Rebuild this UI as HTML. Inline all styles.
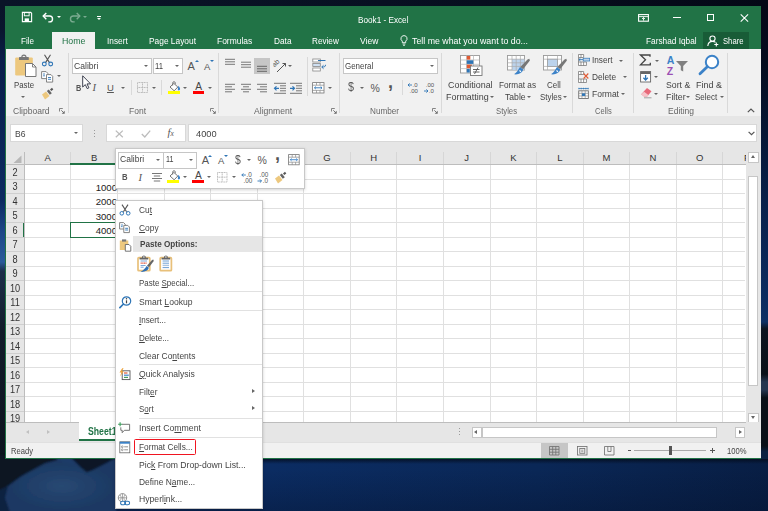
<!DOCTYPE html>
<html><head><meta charset="utf-8"><title>Book1 - Excel</title>
<style>
*{box-sizing:border-box;margin:0;padding:0}
html,body{width:768px;height:511px;overflow:hidden}
body{position:relative;background:#081226;font-family:"Liberation Sans",sans-serif;font-size:9px;color:#444}
.a{position:absolute}
.t{position:absolute;transform-origin:0 0;white-space:nowrap;line-height:12px;height:12px}
#bg{left:0;top:0;width:768px;height:511px;background:linear-gradient(180deg,#050b1b 0,#060f23 20%,#081732 45%,#091c3c 70%,#0a2146 88%,#0b264e 100%)}
#win{left:5px;top:5.6px;width:756.4px;height:453.4px;background:#217346}
#ribbon{left:6px;top:49px;width:754.9px;height:67px;background:#f1f1f1}
#fbar{left:6px;top:116px;width:754.9px;height:34px;background:#e6e6e6}
#sheet{left:6px;top:150px;width:739.5px;height:272px;background:#fff}
#vscroll{left:745.5px;top:150px;width:15px;height:272px;background:#e6e6e6}
#sbar{left:6px;top:422px;width:754.9px;height:20px;background:#e6e6e6}
#status{left:6px;top:442px;width:754.9px;height:16.2px;background:#f1f1f1}
.wt{color:#fff}
.dd{position:absolute;width:0;height:0;border-left:2.5px solid transparent;border-right:2.5px solid transparent;border-top:2.8px solid #666;margin-left:-.3px}
.sep{position:absolute;width:1px;background:#d9d9d9}
.lbl{position:absolute;transform-origin:0 0;white-space:nowrap;line-height:12px;height:12px;color:#666;font-size:9px;top:104.500px}
.box{position:absolute;background:#fff;border:1px solid #c6c6c6}
.ln{position:absolute;height:1px;background:#777}

</style></head><body>
<div id="bg" class="a"></div>
<svg class="a" style="left:0;top:0" width="768" height="511" viewBox="0 0 768 511"><defs><linearGradient id="lg" x1="0" y1="0" x2="0" y2="1"><stop offset="0.000" stop-color="#0a1428"/><stop offset="0.053" stop-color="#09152e"/><stop offset="0.119" stop-color="#091e4a"/><stop offset="0.427" stop-color="#0b2a60"/><stop offset="0.498" stop-color="#1d4788"/><stop offset="0.564" stop-color="#2a5a9a"/><stop offset="0.584" stop-color="#1c2e4a"/><stop offset="0.714" stop-color="#121c2a"/><stop offset="1.000" stop-color="#0c141e"/></linearGradient><linearGradient id="tg" x1="0" y1="0" x2="1" y2="0"><stop offset="0" stop-color="#0a1428"/><stop offset=".5" stop-color="#081022"/><stop offset="1" stop-color="#040816"/></linearGradient><linearGradient id="rgt" x1="0" y1="0" x2="0" y2="1"><stop offset="0.000" stop-color="#040816"/><stop offset="0.119" stop-color="#040c1e"/><stop offset="0.273" stop-color="#061634"/><stop offset="0.427" stop-color="#08204a"/><stop offset="0.648" stop-color="#0c2c60"/><stop offset="0.696" stop-color="#0e3064"/><stop offset="0.711" stop-color="#0c1420"/><stop offset="0.811" stop-color="#0a1018"/><stop offset="0.828" stop-color="#263650"/><stop offset="0.846" stop-color="#263650"/><stop offset="0.863" stop-color="#0a1018"/><stop offset="0.969" stop-color="#0a1018"/><stop offset="0.982" stop-color="#0a2040"/><stop offset="1.000" stop-color="#0a2040"/></linearGradient><linearGradient id="bg2" x1="0" y1="0" x2="1" y2="0"><stop offset="0" stop-color="#0a275c"/><stop offset=".35" stop-color="#0b2c62"/><stop offset=".7" stop-color="#0a2756"/><stop offset="1" stop-color="#081e44"/></linearGradient><linearGradient id="dk" x1="0" y1="0" x2="0" y2="1"><stop offset="0" stop-color="#04102a" stop-opacity="0"/><stop offset="1" stop-color="#04102a" stop-opacity=".35"/></linearGradient><linearGradient id="sh" x1="0" y1="0" x2="0" y2="1"><stop offset="0" stop-color="#030a18" stop-opacity=".75"/><stop offset="1" stop-color="#030a18" stop-opacity="0"/></linearGradient><radialGradient id="rg" cx=".5" cy=".5" r=".5"><stop offset="0" stop-color="#2a4a74" stop-opacity=".9"/><stop offset="1" stop-color="#2a4a74" stop-opacity="0"/></radialGradient><filter id="bl" x="-10%" y="-20%" width="120%" height="140%"><feGaussianBlur stdDeviation="1.300"/></filter></defs>
<rect x="0" y="0" width="768" height="7" fill="url(#tg)"/><rect x="0" y="6" width="6" height="454" fill="url(#lg)"/><rect x="760" y="6" width="8" height="454" fill="url(#rgt)"/>
<rect x="0" y="459" width="768" height="52" fill="url(#bg2)"/>
<rect x="0" y="459" width="768" height="5" fill="url(#sh)"/><rect x="116" y="470" width="652" height="41" fill="url(#dk)"/>
<g filter="url(#bl)"><rect x="-4" y="455" width="120" height="60" fill="#1b3963"/>
<ellipse cx="62" cy="486" rx="52" ry="24" fill="url(#rg)"/>
<path d="M-4 455h61v5l-12 3.300l-23.300 12.700l-13.700 10l-8 4l-4 2z" fill="#0a1324"/>
<path d="M72 455v4l8 7.700l6.700 5.800l6.300-2.500l13.700-7l9.300-5v-3z" fill="#0b1528"/>
<path d="M-4 492l4-2l8-4l-3 12l6 17h-15z" fill="#0f2240"/>
<path d="M57 459h15l6 6l-14-2z" fill="#1a3a68"/></g>
</svg>
<div id="win" class="a"></div>
<!-- title bar -->
<svg class="a" style="left:21.300px;top:11.400px" width="12" height="12" viewBox="0 0 13 13"><path d="M1.5 1.5h9l1 1v9h-10z" fill="none" stroke="#fff" stroke-width="1.2"/><rect x="3.6" y="1.8" width="5.2" height="3.4" fill="none" stroke="#fff" stroke-width="1"/><rect x="4" y="8" width="4.6" height="3.4" fill="#fff"/></svg>
<svg class="a" style="left:42.200px;top:11.700px" width="13" height="11" viewBox="0 0 14 12"><path d="M1.2 4.4h7a3.2 3.2 0 0 1 0 6.4h-1.400" fill="none" stroke="#fff" stroke-width="1.5"/><path d="M4.600 1l-3.400 3.400l3.400 3.400" fill="none" stroke="#fff" stroke-width="1.5"/></svg>
<div class="a" style="left:57.200px;top:15.900px;border:2px solid transparent;border-top:2.500px solid #fff;border-bottom:0"></div>
<svg class="a" style="left:67.500px;top:11.700px;opacity:.4" width="13" height="11" viewBox="0 0 14 12"><g transform="translate(14,0) scale(-1,1)"><path d="M1.2 4.4h7a3.2 3.2 0 0 1 0 6.4h-1.400" fill="none" stroke="#fff" stroke-width="1.5"/><path d="M4.600 1l-3.400 3.400l3.400 3.400" fill="none" stroke="#fff" stroke-width="1.5"/></g></svg>
<div class="a" style="left:83px;top:15.900px;opacity:.4;border:2px solid transparent;border-top:2.500px solid #fff;border-bottom:0"></div>
<div class="a" style="left:96.500px;top:15.500px;width:4px;height:1px;background:#fff"></div>
<div class="a" style="left:96.500px;top:18px;border:2px solid transparent;border-top:2.500px solid #fff;border-bottom:0"></div>
<div class="t wt" style="transform:scaleX(0.909);left:357.500px;top:14px;font-size:9px">Book1 - Excel</div>
<!-- window controls -->
<svg class="a" style="left:637.500px;top:13.700px" width="11" height="8" viewBox="0 0 11 8"><rect x=".6" y=".6" width="9.800" height="6.600" fill="none" stroke="#fff" stroke-width="1.100"/><path d="M.6 2.600h9.800M5.500 3.600v3M4 5l1.500-1.500l1.500 1.500" fill="none" stroke="#fff" stroke-width=".9"/></svg>
<div class="a" style="left:673.300px;top:17px;width:7.500px;height:1.100px;background:#fff"></div>
<div class="a" style="left:707px;top:14.200px;width:7.200px;height:7px;border:1.100px solid #fff"></div>
<svg class="a" style="left:739.800px;top:13.700px" width="9" height="8" viewBox="0 0 9 8"><path d="M.7 .4l7.400 7.200M8.100 .4l-7.400 7.200" stroke="#fff" stroke-width="1.100" fill="none"/></svg>
<!-- tabs -->
<div class="a" style="left:52px;top:32px;width:43px;height:17.500px;background:#f1f1f1"></div>
<div class="t wt" style="transform:scaleX(0.896);left:20.6px;top:35px">File</div>
<div class="t" style="transform:scaleX(0.979);left:61.5px;top:35px;color:#217346">Home</div>
<div class="t wt" style="transform:scaleX(0.919);left:106.5px;top:35px">Insert</div>
<div class="t wt" style="transform:scaleX(0.930);left:148.5px;top:35px">Page Layout</div>
<div class="t wt" style="transform:scaleX(0.938);left:217px;top:35px">Formulas</div>
<div class="t wt" style="transform:scaleX(0.920);left:273.5px;top:35px">Data</div>
<div class="t wt" style="transform:scaleX(0.908);left:312.2px;top:35px">Review</div>
<div class="t wt" style="transform:scaleX(0.945);left:360.2px;top:35px">View</div>
<svg class="a" style="left:400px;top:35px" width="8" height="11" viewBox="0 0 8 11"><path d="M4 .6a3 3 0 0 1 1.700 5.500v1.600h-3.400v-1.600a3 3 0 0 1 1.700-5.500z" fill="none" stroke="#fff" stroke-width=".9"/><path d="M2.600 9h2.800M3 10.300h2" stroke="#fff" stroke-width=".8"/></svg>
<div class="t wt" style="transform:scaleX(0.978);left:412px;top:35px">Tell me what you want to do...</div>
<div class="t wt" style="transform:scaleX(0.919);left:645.6px;top:35px">Farshad Iqbal</div>
<div class="a" style="left:703.400px;top:32px;width:45.600px;height:16.600px;background:#185c37"></div>
<svg class="a" style="left:707px;top:34.500px" width="12" height="12" viewBox="0 0 12 12"><circle cx="5.500" cy="3.600" r="2.600" fill="none" stroke="#fff" stroke-width="1.100"/><path d="M.8 11c.3-3 2-4.600 4.700-4.600 1.300 0 2.300.4 3 1" fill="none" stroke="#fff" stroke-width="1.100"/><path d="M9.300 7.500v4M7.300 9.500h4" stroke="#fff" stroke-width="1.100"/></svg>
<div class="t wt" style="transform:scaleX(0.853);left:722.5px;top:35px">Share</div>

<div id="ribbon" class="a"></div>
<!-- clipboard group -->
<svg class="a" style="left:14px;top:54px" width="24" height="24" viewBox="0 0 24 24"><rect x="1.200" y="3.400" width="17.600" height="18" rx="1.200" fill="#edc87e"/><rect x="5" y="3" width="9.800" height="3" rx=".6" fill="#777"/><path d="M7.800 3.200a2.100 2.100 0 0 1 4.200 0" fill="none" stroke="#777" stroke-width="1.100"/><path d="M11.500 9.500h7l3.500 3.500v9.500h-10.500z" fill="#fff" stroke="#777" stroke-width="1"/><path d="M18.500 9.500v3.500h3.500" fill="none" stroke="#777" stroke-width=".9"/></svg>
<div class="t" style="transform:scaleX(0.869);left:14.2px;top:79px">Paste</div>
<div class="dd" style="left:21.500px;top:95.500px"></div>
<svg class="a" style="left:41px;top:53.500px" width="13" height="13" viewBox="0 0 13 13"><path d="M3.500 .8l4.800 7.600M9.500 .8l-4.800 7.600" stroke="#555" stroke-width="1.100" fill="none"/><circle cx="3.300" cy="10" r="1.900" fill="none" stroke="#2e75b6" stroke-width="1.100"/><circle cx="9.700" cy="10" r="1.900" fill="none" stroke="#2e75b6" stroke-width="1.100"/></svg>
<svg class="a" style="left:41px;top:70.500px" width="13" height="12" viewBox="0 0 13 12"><path d="M.6 .6h4.500l1.700 1.700v5.300h-6.200z" fill="#fff" stroke="#777" stroke-width=".9"/><path d="M5.500 3.600h4.500l1.700 1.700v5.800h-6.200z" fill="#fff" stroke="#777" stroke-width=".9"/><path d="M2 3h2M2 4.800h2" stroke="#2e75b6" stroke-width=".8"/><path d="M7 6.500h3M7 8.300h3" stroke="#2e75b6" stroke-width=".9"/></svg>
<div class="dd" style="left:57px;top:75px"></div>
<svg class="a" style="left:41px;top:87px" width="13" height="13" viewBox="0 0 13 13"><path d="M1 7.500l4-3l3.500 4.500l-4.500 3.500z" fill="#edc87e"/><path d="M5.800 4l2-1.600l3 3.800l-2 1.600z" fill="#666"/><path d="M9 2.500l2-1.700l1.300 1.600l-2 1.700z" fill="#555"/></svg>
<div class="lbl" style="transform:scaleX(0.947);left:13px">Clipboard</div>
<svg class="a" style="left:58.500px;top:107.500px" width="6" height="6" viewBox="0 0 6 6"><path d="M.5 3.500V.5H3.800" fill="none" stroke="#777" stroke-width=".9"/><path d="M2.300 2.300l2.200 2.200" fill="none" stroke="#666" stroke-width=".9"/><path d="M5.700 2.700v3h-3z" fill="#666"/></svg>
<div class="sep" style="left:67.5px;top:53px;height:60px"></div>
<!-- font group -->
<div class="box" style="left:71.500px;top:57.500px;width:80px;height:16px"></div>
<div class="t" style="transform:scaleX(0.956);left:74px;top:60px">Calibri</div>
<div class="dd" style="left:144.500px;top:65px"></div>
<div class="box" style="left:152.500px;top:57.500px;width:30.500px;height:16px"></div>
<div class="t" style="transform:scaleX(0.856);left:154.7px;top:60px">11</div>
<div class="dd" style="left:175.500px;top:65px"></div>
<div class="t" style="left:187.500px;top:59.500px;font-size:11px;color:#555">A</div>
<div class="a" style="left:194.500px;top:60px;border:2.200px solid transparent;border-bottom:2.600px solid #2e75b6;border-top:0"></div>
<div class="t" style="left:204px;top:60.500px;font-size:9.500px;color:#555">A</div>
<div class="a" style="left:210px;top:60px;border:2.200px solid transparent;border-top:2.600px solid #2e75b6;border-bottom:0"></div>
<div class="t" style="transform:scaleX(0.798);left:76.100px;top:81.700px;font-weight:bold;font-size:9.200px;color:#555">B</div>
<div class="t" style="left:92.500px;top:82px;font-style:italic;font-family:'Liberation Serif',serif;font-size:10.500px;color:#555">I</div>
<div class="t" style="left:107px;top:82px;font-size:9.500px;color:#555;text-decoration:underline">U</div>
<div class="dd" style="left:121px;top:87px"></div>
<div class="sep" style="left:131.0px;top:80px;height:15px"></div>
<svg class="a" style="left:137px;top:82px" width="11" height="11" viewBox="0 0 11 11"><path d="M.5 .5h10v10h-10zM5.500 .5v10M.5 5.500h10" fill="none" stroke="#b0b0b0" stroke-width=".9" stroke-dasharray="1 .6"/></svg>
<div class="dd" style="left:152.500px;top:87px"></div>
<div class="sep" style="left:161.3px;top:80px;height:15px"></div>
<svg class="a" style="left:168px;top:81px" width="13" height="10" viewBox="0 0 13 10"><path d="M5.800 2.400l4 3.600l-3.600 3.800l-4.200-3.800z" fill="#fff" stroke="#666" stroke-width=".9" stroke-linejoin="round"/><path d="M4.700 4.600v-2.600a1.300 1.300 0 0 1 2.600 0v1.200" fill="none" stroke="#666" stroke-width=".8"/><path d="M10.300 4.800c1.800 1.600 2.300 3.300 1.400 4.300c-1 .8-2.200.2-1.800-1.300z" fill="#3b82c8"/></svg>
<div class="a" style="left:168px;top:91px;width:11.500px;height:2.600px;background:#ffff00"></div>
<div class="dd" style="left:183.500px;top:87px"></div>
<div class="t" style="left:195.300px;top:80.800px;font-size:10.200px;color:#444">A</div>
<div class="a" style="left:192.800px;top:91px;width:11.500px;height:2.600px;background:#ff0000"></div>
<div class="dd" style="left:208px;top:87px"></div>
<div class="lbl" style="transform:scaleX(0.944);left:129.2px">Font</div>
<svg class="a" style="left:209.500px;top:107.500px" width="6" height="6" viewBox="0 0 6 6"><path d="M.5 3.500V.5H3.800" fill="none" stroke="#777" stroke-width=".9"/><path d="M2.300 2.300l2.200 2.200" fill="none" stroke="#666" stroke-width=".9"/><path d="M5.700 2.700v3h-3z" fill="#666"/></svg>
<div class="sep" style="left:218.0px;top:53px;height:60px"></div>
<!-- alignment group -->
<div class="a" style="left:254px;top:57.500px;width:16px;height:16.500px;background:#c6c6c6"></div>
<svg class="a" style="left:224px;top:56px" width="50" height="18" viewBox="0 0 50 18"><path d="M1 3.300h10M1 5.800h10M1 8.300h10" stroke="#777" stroke-width="1"/><path d="M17 6.200h10M17 8.700h10M17 11.200h10" stroke="#777" stroke-width="1"/><path d="M33 10.300h10M33 12.800h10M33 15.300h10" stroke="#666" stroke-width="1"/></svg>
<svg class="a" style="left:273px;top:58.500px" width="14" height="14" viewBox="0 0 14 14"><path d="M4 13l8.500-8.500M12.500 4.500h-3M12.500 4.500v3" stroke="#555" stroke-width="1" fill="none"/><text x="0" y="0" font-size="7" fill="#555" font-family="Liberation Sans" transform="translate(1.500,8.500) rotate(-45)">ab</text></svg>
<div class="dd" style="left:288.500px;top:65px"></div>
<div class="sep" style="left:306.5px;top:57px;height:39px"></div>
<svg class="a" style="left:311.500px;top:58px" width="15" height="15" viewBox="0 0 15 15"><rect x=".8" y="1" width="7.500" height="3" fill="#fff" stroke="#888" stroke-width=".8"/><rect x=".8" y="5.500" width="7.500" height="3" fill="#cfe0f2" stroke="#888" stroke-width=".8"/><rect x=".8" y="10" width="7.500" height="3" fill="#fff" stroke="#888" stroke-width=".8"/><path d="M6 2.500h7.500M13.500 6.800c0 2-1 2.200-3.500 2.200M11.500 7.300l-1.800 1.700l1.800 1.700" fill="none" stroke="#2e75b6" stroke-width="1"/></svg>
<svg class="a" style="left:224px;top:81px" width="80" height="14" viewBox="0 0 80 14"><g stroke="#777" stroke-width="1"><path d="M1 3.300h10M1 5.800h7M1 8.300h10M1 10.800h7"/><path d="M17 3.300h10M19 5.800h6M17 8.300h10M19 10.800h6"/><path d="M33 3.300h10M36 5.800h7M33 8.300h10M36 10.800h7"/><path d="M50 2.300h12M56 4.800h6M56 7.300h6M56 9.800h6M50 12.300h12"/><path d="M66 2.300h12M72 4.800h6M72 7.300h6M72 9.800h6M66 12.300h12"/></g><path d="M50.500 7.300h4.500M52.500 5.300l-2 2l2 2" fill="none" stroke="#2e75b6" stroke-width="1.200"/><path d="M66 7.300h4.500M68.500 5.300l2 2l-2 2" fill="none" stroke="#2e75b6" stroke-width="1.200"/></svg>
<svg class="a" style="left:312px;top:82px" width="13" height="12" viewBox="0 0 13 12"><rect x=".6" y=".6" width="11.400" height="10.400" fill="#fff" stroke="#777" stroke-width=".8"/><path d="M.6 3.200h11.400M.6 8.400h11.400M4.500 .6v2.600M8 .6v2.600M4.500 8.400v2.600M8 8.400v2.600" stroke="#888" stroke-width=".7"/><path d="M2.500 5.800h7.500M3.800 4.600l-1.300 1.200l1.300 1.200M8.700 4.600l1.300 1.200l-1.300 1.200" fill="none" stroke="#2e75b6" stroke-width=".9"/></svg>
<div class="dd" style="left:328.500px;top:87px"></div>
<div class="lbl" style="transform:scaleX(0.954);left:254px">Alignment</div>
<svg class="a" style="left:330.500px;top:107.500px" width="6" height="6" viewBox="0 0 6 6"><path d="M.5 3.500V.5H3.800" fill="none" stroke="#777" stroke-width=".9"/><path d="M2.300 2.300l2.200 2.200" fill="none" stroke="#666" stroke-width=".9"/><path d="M5.700 2.700v3h-3z" fill="#666"/></svg>
<div class="sep" style="left:338.5px;top:53px;height:60px"></div>
<!-- number group -->
<div class="box" style="left:342.500px;top:57.500px;width:95px;height:16px"></div>
<div class="t" style="transform:scaleX(0.884);left:345.2px;top:60px">General</div>
<div class="dd" style="left:430px;top:65px"></div>
<div class="t" style="transform:scaleX(0.863);left:348px;top:81.300px;font-size:12.500px;color:#555">$</div>
<div class="dd" style="left:360.500px;top:87px"></div>
<div class="t" style="left:370.500px;top:81.500px;font-size:10.500px;color:#555">%</div>
<div class="t" style="left:388px;top:75.800px;font-size:18px;font-weight:bold;color:#555">,</div>
<div class="sep" style="left:402.0px;top:80px;height:15px"></div>
<svg class="a" style="left:407px;top:82px" width="28" height="12" viewBox="0 0 28 12"><g font-family="Liberation Sans" font-size="6" fill="#555"><text x="5.500" y="4.800">.0</text><text x="2.500" y="10.800">.00</text><text x="18.800" y="4.800">.00</text><text x="21.800" y="10.800">.0</text></g><path d="M1 3h4M2.600 1.400l-1.600 1.600l1.600 1.600" fill="none" stroke="#2e75b6" stroke-width=".9"/><path d="M17 9h4M19.400 7.400l1.600 1.600l-1.600 1.600" fill="none" stroke="#2e75b6" stroke-width=".9"/></svg>
<div class="lbl" style="transform:scaleX(0.906);left:370.2px">Number</div>
<svg class="a" style="left:431.500px;top:107.500px" width="6" height="6" viewBox="0 0 6 6"><path d="M.5 3.500V.5H3.800" fill="none" stroke="#777" stroke-width=".9"/><path d="M2.300 2.300l2.200 2.200" fill="none" stroke="#666" stroke-width=".9"/><path d="M5.700 2.700v3h-3z" fill="#666"/></svg>
<div class="sep" style="left:440.5px;top:53px;height:60px"></div>
<!-- styles group -->
<svg class="a" style="left:460px;top:55px" width="23" height="22" viewBox="0 0 23 22"><rect x=".5" y=".5" width="19" height="17.500" fill="#fff" stroke="#999" stroke-width=".9"/><path d="M.5 5h19M.5 9.300h19M.5 13.600h19M6.500 .5v17.500M13.500 .5v17.500" stroke="#bbb" stroke-width=".8"/><rect x="6.800" y="1" width="3.500" height="3.600" fill="#e05a33"/><rect x="6.800" y="5.300" width="6.500" height="3.600" fill="#2e75b6"/><rect x="6.800" y="9.600" width="5" height="3.600" fill="#e05a33"/><rect x="6.800" y="13.900" width="3" height="3.600" fill="#2e75b6"/><rect x="10.500" y="11" width="11.500" height="9.500" fill="#fff" stroke="#777" stroke-width=".9"/><path d="M13 14.500h6.500M13 17h6.500M18 12.500l-3.500 6.500" stroke="#555" stroke-width=".9"/></svg>
<div class="t" style="transform:scaleX(0.990);left:448.2px;top:79px">Conditional</div>
<div class="t" style="transform:scaleX(0.993);left:445.8px;top:90.500px">Formatting</div>
<div class="dd" style="left:490px;top:96px"></div>
<svg class="a" style="left:507px;top:55px" width="23" height="22" viewBox="0 0 23 22"><rect x=".5" y=".5" width="17" height="14.500" fill="#fff" stroke="#999" stroke-width=".9"/><rect x="5" y="4.200" width="12.500" height="10.800" fill="#bcd3ec"/><path d="M.5 4.200h17M.5 7.800h17M.5 11.400h17M5 .5v14.500M9.200 .5v14.500M13.400 .5v14.500" stroke="#aaa" stroke-width=".7"/><path d="M22.300 3.800l.6 1.800l-6.800 8.700l-2.800-2.200l7.200-7.600z" fill="#777"/><path d="M13 12l3.200 2.500c-.8 3.200-4.500 5.500-9.200 4.800c3-1.600 4.200-4.800 6-7.300z" fill="#3b82c8"/><path d="M12.500 15.500l1.500 1.200" stroke="#fff" stroke-width="1.100"/></svg>
<div class="t" style="transform:scaleX(0.913);left:498.8px;top:79px">Format as</div>
<div class="t" style="transform:scaleX(0.957);left:504.5px;top:90.500px">Table</div>
<div class="dd" style="left:527.500px;top:96px"></div>
<svg class="a" style="left:543px;top:55px" width="24" height="22" viewBox="0 0 24 22"><rect x=".5" y=".5" width="18" height="14.500" fill="#fff" stroke="#999" stroke-width=".9"/><path d="M.5 4.200h18M.5 11.400h18M4.500 .5v14.500M14.500 .5v14.500" stroke="#aaa" stroke-width=".7"/><rect x="4.500" y="4.200" width="10" height="7.200" fill="#bcd3ec" stroke="#999" stroke-width=".7"/><path d="M23.300 3.800l.6 1.800l-6.800 8.700l-2.800-2.200l7.200-7.600z" fill="#777"/><path d="M14 12l3.200 2.500c-.8 3.200-4.500 5.500-9.200 4.800c3-1.600 4.200-4.800 6-7.300z" fill="#3b82c8"/><path d="M13.500 15.500l1.500 1.200" stroke="#fff" stroke-width="1.100"/></svg>
<div class="t" style="transform:scaleX(0.883);left:546.7px;top:79px">Cell</div>
<div class="t" style="transform:scaleX(0.881);left:539.7px;top:90.500px">Styles</div>
<div class="dd" style="left:563.500px;top:96px"></div>
<div class="lbl" style="transform:scaleX(0.857);left:496px">Styles</div>
<div class="sep" style="left:572.0px;top:53px;height:60px"></div>
<!-- cells group -->
<svg class="a" style="left:577.700px;top:54px" width="12.200" height="12" viewBox="0 0 13 12" preserveAspectRatio="none"><path d="M.5 .5h5.500v3h-5.500zM.5 8h8.500v3.500h-8.500zM.5 3.500v4.500M3.200 .5v3M3.200 8v3.500M6 8v3.500" fill="#fff" stroke="#777" stroke-width=".8"/><rect x="5.500" y="4.200" width="7" height="2.800" fill="#bcd3ec" stroke="#2e75b6" stroke-width=".7"/><path d="M5.500 5.600h-4.500M2.600 4.200l-1.600 1.400l1.600 1.400" fill="none" stroke="#2e75b6" stroke-width=".9"/></svg>
<div class="t" style="transform:scaleX(0.915);left:592.2px;top:54px">Insert</div>
<div class="dd" style="left:619.500px;top:59.500px"></div>
<svg class="a" style="left:577.700px;top:70.500px" width="12.200" height="12" viewBox="0 0 13 12" preserveAspectRatio="none"><path d="M.5 .5h5.500v3h-5.500zM.5 8h8.500v3.500h-8.500zM.5 3.500v4.500M3.200 .5v3M3.200 8v3.500M6 8v3.500" fill="#fff" stroke="#777" stroke-width=".8"/><path d="M6 2.500l5 5M11 2.500l-5 5" stroke="#e05a33" stroke-width="1.200"/></svg>
<div class="t" style="transform:scaleX(0.923);left:592.2px;top:70.500px">Delete</div>
<div class="dd" style="left:622.800px;top:76px"></div>
<svg class="a" style="left:577.700px;top:86.500px" width="12" height="12.500" viewBox="0 0 13 13" preserveAspectRatio="none"><path d="M1 .8v1.700M3.500 .8v1.700M6 .8v1.700M8.500 .8v1.700M11 .8v1.700M.6 1.600h10.800" stroke="#2e75b6" stroke-width=".8"/><rect x=".8" y="4" width="10.400" height="8" fill="#fff" stroke="#666" stroke-width=".9"/><path d="M.8 6.600h10.400M.8 9.300h10.400M4.300 4v8M7.800 4v8" stroke="#888" stroke-width=".7"/><rect x="4.300" y="6.600" width="3.500" height="2.700" fill="#2e75b6"/></svg>
<div class="t" style="transform:scaleX(0.947);left:592.2px;top:87.500px">Format</div>
<div class="dd" style="left:621.500px;top:93px"></div>
<div class="lbl" style="transform:scaleX(0.834);left:594.8px">Cells</div>
<div class="sep" style="left:632.5px;top:53px;height:60px"></div>
<!-- editing group -->
<svg class="a" style="left:639px;top:54px" width="13" height="12" viewBox="0 0 13 12"><path d="M11 2.800V1H1.500l5 4.800l-5 5H11.300V8.800" fill="none" stroke="#444" stroke-width="1.300"/></svg>
<div class="dd" style="left:655px;top:59.500px"></div>
<svg class="a" style="left:639.500px;top:70.500px" width="12" height="12" viewBox="0 0 12 12"><rect x=".6" y=".6" width="10" height="10.400" fill="#fff" stroke="#666" stroke-width=".9"/><rect x=".6" y=".6" width="10" height="2.400" fill="#666"/><path d="M5.600 4v5M3.400 6.800l2.200 2.200l2.200-2.200" fill="none" stroke="#2e75b6" stroke-width="1.300"/></svg>
<div class="dd" style="left:654px;top:76px"></div>
<svg class="a" style="left:639.500px;top:87px" width="13" height="12" viewBox="0 0 13 12"><path d="M7 1l4.500 3.200l-4.300 5.300h-3.200l-2.800-2.200z" fill="#e8697a"/><path d="M1.200 7.300l2.800 2.200h3.200l1.200-1.500l-4.300-3.300z" fill="#f6c4ca"/><path d="M4 10.800h7.500" stroke="#999" stroke-width=".9"/></svg>
<div class="dd" style="left:654px;top:93px"></div>
<svg class="a" style="left:665px;top:55px" width="25" height="22" viewBox="0 0 25 22"><text x="1.800" y="9" font-family="Liberation Sans" font-weight="bold" font-size="10.500" fill="#3b82c8">A</text><text x="1.800" y="20" font-family="Liberation Sans" font-weight="bold" font-size="10.500" fill="#9b4fb3">Z</text><path d="M11 6h12l-4.800 5v5.500l-2.400-1.300v-4.200z" fill="#808080"/></svg>
<div class="t" style="transform:scaleX(0.967);left:665.6px;top:78.500px">Sort &amp;</div>
<div class="t" style="transform:scaleX(0.980);left:665.6px;top:90.500px">Filter</div>
<div class="dd" style="left:686px;top:96px"></div>
<svg class="a" style="left:697px;top:54px" width="24" height="22" viewBox="0 0 24 22"><circle cx="15" cy="8" r="6.200" fill="#fff" stroke="#3b82c8" stroke-width="2"/><path d="M10.300 12.700l-7.300 7" stroke="#3b82c8" stroke-width="2.800" stroke-linecap="round"/></svg>
<div class="t" style="transform:scaleX(0.999);left:696.1px;top:78.500px">Find &amp;</div>
<div class="t" style="transform:scaleX(0.887);left:694.8px;top:90.500px">Select</div>
<div class="dd" style="left:720px;top:96px"></div>
<div class="lbl" style="transform:scaleX(0.944);left:668.3px">Editing</div>
<div class="sep" style="left:727.3px;top:53px;height:60px"></div>
<svg class="a" style="left:746.500px;top:107.500px" width="8" height="5" viewBox="0 0 8 5"><path d="M.8 4.200l3.200-3.200l3.200 3.200" fill="none" stroke="#555" stroke-width="1.200"/></svg>
<svg class="a" style="left:81.500px;top:74.500px" width="11" height="15" viewBox="0 0 11 15"><path d="M.7 .8v11.200l2.600-2.400l1.900 4l1.700-.8l-1.900-3.900h3.600z" fill="#fff" stroke="#2b3040" stroke-width=".9" stroke-linejoin="round"/></svg>

<div id="fbar" class="a"></div>
<div class="box" style="left:9.500px;top:124px;width:73.500px;height:18.300px;border-color:#d8d8d8"></div>
<div class="t" style="transform:scaleX(0.903);left:14.500px;top:127.500px;font-size:9.500px">B6</div>
<div class="dd" style="left:73.800px;top:132px"></div>
<div class="a" style="left:93.800px;top:130px;width:1px;height:1px;background:#999;box-shadow:0 3px 0 #999,0 6px 0 #999"></div>
<div class="box" style="left:105.500px;top:124px;width:80px;height:18.300px;border-color:#d8d8d8"></div>
<svg class="a" style="left:115px;top:130px" width="9" height="8" viewBox="0 0 9 8"><path d="M.8 .6l7 6.600M7.800 .6l-7 6.600" stroke="#bcbcbc" stroke-width="1.300" fill="none"/></svg>
<svg class="a" style="left:140.500px;top:130px" width="10" height="8" viewBox="0 0 10 8"><path d="M.8 4l3 3l5.400-6.400" stroke="#bcbcbc" stroke-width="1.300" fill="none"/></svg>
<div class="t" style="left:167.500px;top:127px;font-family:'Liberation Serif',serif;font-style:italic;font-size:10.500px;color:#555">f<span style="font-size:7.500px">x</span></div>
<div class="box" style="left:187.500px;top:124px;width:569.500px;height:18.300px;border-color:#d8d8d8"></div>
<div class="t" style="transform:scaleX(0.974);left:196.300px;top:127.500px;font-size:9.500px">4000</div>
<svg class="a" style="left:747.500px;top:131px" width="7" height="5" viewBox="0 0 7 5"><path d="M.6 .8l2.900 2.900l2.900-2.900" fill="none" stroke="#555" stroke-width="1.200"/></svg>

<div id="sheet" class="a"></div>
<div class="a" style="left:6px;top:150px;width:739.500px;height:14.600px;background:#e6e6e6"></div>
<div class="a" style="left:6px;top:164.600px;width:18.300px;height:257.400px;background:#e6e6e6"></div>
<svg class="a" style="left:12.500px;top:154.500px" width="10" height="9" viewBox="0 0 10 9"><path d="M8.500 .5v7.500h-8z" fill="#b7b7b7"/></svg>
<div class="a" style="left:23.8px;top:164.600px;width:1px;height:257.400px;background:#e0e0e0"></div>
<div class="a" style="left:23.8px;top:152px;width:1px;height:12.600px;background:#d6d6d6"></div>
<div class="a" style="left:70.4px;top:164.600px;width:1px;height:257.400px;background:#e0e0e0"></div>
<div class="a" style="left:70.4px;top:152px;width:1px;height:12.600px;background:#d6d6d6"></div>
<div class="a" style="left:116.9px;top:164.600px;width:1px;height:257.400px;background:#e0e0e0"></div>
<div class="a" style="left:116.9px;top:152px;width:1px;height:12.600px;background:#d6d6d6"></div>
<div class="a" style="left:163.5px;top:164.600px;width:1px;height:257.400px;background:#e0e0e0"></div>
<div class="a" style="left:163.5px;top:152px;width:1px;height:12.600px;background:#d6d6d6"></div>
<div class="a" style="left:210.1px;top:164.600px;width:1px;height:257.400px;background:#e0e0e0"></div>
<div class="a" style="left:210.1px;top:152px;width:1px;height:12.600px;background:#d6d6d6"></div>
<div class="a" style="left:256.6px;top:164.600px;width:1px;height:257.400px;background:#e0e0e0"></div>
<div class="a" style="left:256.6px;top:152px;width:1px;height:12.600px;background:#d6d6d6"></div>
<div class="a" style="left:303.2px;top:164.600px;width:1px;height:257.400px;background:#e0e0e0"></div>
<div class="a" style="left:303.2px;top:152px;width:1px;height:12.600px;background:#d6d6d6"></div>
<div class="a" style="left:349.8px;top:164.600px;width:1px;height:257.400px;background:#e0e0e0"></div>
<div class="a" style="left:349.8px;top:152px;width:1px;height:12.600px;background:#d6d6d6"></div>
<div class="a" style="left:396.4px;top:164.600px;width:1px;height:257.400px;background:#e0e0e0"></div>
<div class="a" style="left:396.4px;top:152px;width:1px;height:12.600px;background:#d6d6d6"></div>
<div class="a" style="left:442.9px;top:164.600px;width:1px;height:257.400px;background:#e0e0e0"></div>
<div class="a" style="left:442.9px;top:152px;width:1px;height:12.600px;background:#d6d6d6"></div>
<div class="a" style="left:489.5px;top:164.600px;width:1px;height:257.400px;background:#e0e0e0"></div>
<div class="a" style="left:489.5px;top:152px;width:1px;height:12.600px;background:#d6d6d6"></div>
<div class="a" style="left:536.1px;top:164.600px;width:1px;height:257.400px;background:#e0e0e0"></div>
<div class="a" style="left:536.1px;top:152px;width:1px;height:12.600px;background:#d6d6d6"></div>
<div class="a" style="left:582.6px;top:164.600px;width:1px;height:257.400px;background:#e0e0e0"></div>
<div class="a" style="left:582.6px;top:152px;width:1px;height:12.600px;background:#d6d6d6"></div>
<div class="a" style="left:629.2px;top:164.600px;width:1px;height:257.400px;background:#e0e0e0"></div>
<div class="a" style="left:629.2px;top:152px;width:1px;height:12.600px;background:#d6d6d6"></div>
<div class="a" style="left:675.8px;top:164.600px;width:1px;height:257.400px;background:#e0e0e0"></div>
<div class="a" style="left:675.8px;top:152px;width:1px;height:12.600px;background:#d6d6d6"></div>
<div class="a" style="left:722.3px;top:164.600px;width:1px;height:257.400px;background:#e0e0e0"></div>
<div class="a" style="left:722.3px;top:152px;width:1px;height:12.600px;background:#d6d6d6"></div>
<div class="a" style="left:24.300px;top:164.1px;width:721.200px;height:1px;background:#e0e0e0"></div>
<div class="a" style="left:6px;top:164.1px;width:18.300px;height:1px;background:#cfcfcf"></div>
<div class="a" style="left:24.300px;top:178.6px;width:721.200px;height:1px;background:#e0e0e0"></div>
<div class="a" style="left:6px;top:178.6px;width:18.300px;height:1px;background:#cfcfcf"></div>
<div class="a" style="left:24.300px;top:193.1px;width:721.200px;height:1px;background:#e0e0e0"></div>
<div class="a" style="left:6px;top:193.1px;width:18.300px;height:1px;background:#cfcfcf"></div>
<div class="a" style="left:24.300px;top:207.6px;width:721.200px;height:1px;background:#e0e0e0"></div>
<div class="a" style="left:6px;top:207.6px;width:18.300px;height:1px;background:#cfcfcf"></div>
<div class="a" style="left:24.300px;top:222.1px;width:721.200px;height:1px;background:#e0e0e0"></div>
<div class="a" style="left:6px;top:222.1px;width:18.300px;height:1px;background:#cfcfcf"></div>
<div class="a" style="left:24.300px;top:236.6px;width:721.200px;height:1px;background:#e0e0e0"></div>
<div class="a" style="left:6px;top:236.6px;width:18.300px;height:1px;background:#cfcfcf"></div>
<div class="a" style="left:24.300px;top:251.1px;width:721.200px;height:1px;background:#e0e0e0"></div>
<div class="a" style="left:6px;top:251.1px;width:18.300px;height:1px;background:#cfcfcf"></div>
<div class="a" style="left:24.300px;top:265.6px;width:721.200px;height:1px;background:#e0e0e0"></div>
<div class="a" style="left:6px;top:265.6px;width:18.300px;height:1px;background:#cfcfcf"></div>
<div class="a" style="left:24.300px;top:280.1px;width:721.200px;height:1px;background:#e0e0e0"></div>
<div class="a" style="left:6px;top:280.1px;width:18.300px;height:1px;background:#cfcfcf"></div>
<div class="a" style="left:24.300px;top:294.6px;width:721.200px;height:1px;background:#e0e0e0"></div>
<div class="a" style="left:6px;top:294.6px;width:18.300px;height:1px;background:#cfcfcf"></div>
<div class="a" style="left:24.300px;top:309.1px;width:721.200px;height:1px;background:#e0e0e0"></div>
<div class="a" style="left:6px;top:309.1px;width:18.300px;height:1px;background:#cfcfcf"></div>
<div class="a" style="left:24.300px;top:323.6px;width:721.200px;height:1px;background:#e0e0e0"></div>
<div class="a" style="left:6px;top:323.6px;width:18.300px;height:1px;background:#cfcfcf"></div>
<div class="a" style="left:24.300px;top:338.1px;width:721.200px;height:1px;background:#e0e0e0"></div>
<div class="a" style="left:6px;top:338.1px;width:18.300px;height:1px;background:#cfcfcf"></div>
<div class="a" style="left:24.300px;top:352.6px;width:721.200px;height:1px;background:#e0e0e0"></div>
<div class="a" style="left:6px;top:352.6px;width:18.300px;height:1px;background:#cfcfcf"></div>
<div class="a" style="left:24.300px;top:367.1px;width:721.200px;height:1px;background:#e0e0e0"></div>
<div class="a" style="left:6px;top:367.1px;width:18.300px;height:1px;background:#cfcfcf"></div>
<div class="a" style="left:24.300px;top:381.6px;width:721.200px;height:1px;background:#e0e0e0"></div>
<div class="a" style="left:6px;top:381.6px;width:18.300px;height:1px;background:#cfcfcf"></div>
<div class="a" style="left:24.300px;top:396.1px;width:721.200px;height:1px;background:#e0e0e0"></div>
<div class="a" style="left:6px;top:396.1px;width:18.300px;height:1px;background:#cfcfcf"></div>
<div class="a" style="left:24.300px;top:410.6px;width:721.200px;height:1px;background:#e0e0e0"></div>
<div class="a" style="left:6px;top:410.6px;width:18.300px;height:1px;background:#cfcfcf"></div>
<div class="a" style="left:6px;top:163.700px;width:739.500px;height:1px;background:#bdbdbd"></div>
<div class="a" style="left:23.800px;top:152px;width:1px;height:270px;background:#bdbdbd"></div>
<div class="t" style="left:37.6px;top:151.800px;width:20px;text-align:center;font-size:9.500px;color:#333">A</div>
<div class="t" style="left:84.2px;top:151.800px;width:20px;text-align:center;font-size:9.500px;color:#333">B</div>
<div class="t" style="left:130.7px;top:151.800px;width:20px;text-align:center;font-size:9.500px;color:#333">C</div>
<div class="t" style="left:177.3px;top:151.800px;width:20px;text-align:center;font-size:9.500px;color:#333">D</div>
<div class="t" style="left:223.9px;top:151.800px;width:20px;text-align:center;font-size:9.500px;color:#333">E</div>
<div class="t" style="left:270.4px;top:151.800px;width:20px;text-align:center;font-size:9.500px;color:#333">F</div>
<div class="t" style="left:317.0px;top:151.800px;width:20px;text-align:center;font-size:9.500px;color:#333">G</div>
<div class="t" style="left:363.6px;top:151.800px;width:20px;text-align:center;font-size:9.500px;color:#333">H</div>
<div class="t" style="left:410.1px;top:151.800px;width:20px;text-align:center;font-size:9.500px;color:#333">I</div>
<div class="t" style="left:456.7px;top:151.800px;width:20px;text-align:center;font-size:9.500px;color:#333">J</div>
<div class="t" style="left:503.3px;top:151.800px;width:20px;text-align:center;font-size:9.500px;color:#333">K</div>
<div class="t" style="left:549.9px;top:151.800px;width:20px;text-align:center;font-size:9.500px;color:#333">L</div>
<div class="t" style="left:596.4px;top:151.800px;width:20px;text-align:center;font-size:9.500px;color:#333">M</div>
<div class="t" style="left:643.0px;top:151.800px;width:20px;text-align:center;font-size:9.500px;color:#333">N</div>
<div class="t" style="left:689.6px;top:151.800px;width:20px;text-align:center;font-size:9.500px;color:#333">O</div>
<div class="t" style="left:737.1px;top:151.800px;width:20px;text-align:center;font-size:9.500px;color:#333">P</div>
<div class="t" style="left:6px;top:166.5px;width:18px;text-align:center;font-size:10px;color:#333;transform-origin:50% 0;transform:scaleX(.92)">2</div>
<div class="t" style="left:6px;top:181.0px;width:18px;text-align:center;font-size:10px;color:#333;transform-origin:50% 0;transform:scaleX(.92)">3</div>
<div class="t" style="left:6px;top:195.5px;width:18px;text-align:center;font-size:10px;color:#333;transform-origin:50% 0;transform:scaleX(.92)">4</div>
<div class="t" style="left:6px;top:210.0px;width:18px;text-align:center;font-size:10px;color:#333;transform-origin:50% 0;transform:scaleX(.92)">5</div>
<div class="t" style="left:6px;top:224.5px;width:18px;text-align:center;font-size:10px;color:#333;transform-origin:50% 0;transform:scaleX(.92)">6</div>
<div class="t" style="left:6px;top:239.0px;width:18px;text-align:center;font-size:10px;color:#333;transform-origin:50% 0;transform:scaleX(.92)">7</div>
<div class="t" style="left:6px;top:253.5px;width:18px;text-align:center;font-size:10px;color:#333;transform-origin:50% 0;transform:scaleX(.92)">8</div>
<div class="t" style="left:6px;top:268.0px;width:18px;text-align:center;font-size:10px;color:#333;transform-origin:50% 0;transform:scaleX(.92)">9</div>
<div class="t" style="left:6px;top:282.5px;width:18px;text-align:center;font-size:10px;color:#333;transform-origin:50% 0;transform:scaleX(.92)">10</div>
<div class="t" style="left:6px;top:297.0px;width:18px;text-align:center;font-size:10px;color:#333;transform-origin:50% 0;transform:scaleX(.92)">11</div>
<div class="t" style="left:6px;top:311.5px;width:18px;text-align:center;font-size:10px;color:#333;transform-origin:50% 0;transform:scaleX(.92)">12</div>
<div class="t" style="left:6px;top:326.0px;width:18px;text-align:center;font-size:10px;color:#333;transform-origin:50% 0;transform:scaleX(.92)">13</div>
<div class="t" style="left:6px;top:340.5px;width:18px;text-align:center;font-size:10px;color:#333;transform-origin:50% 0;transform:scaleX(.92)">14</div>
<div class="t" style="left:6px;top:355.0px;width:18px;text-align:center;font-size:10px;color:#333;transform-origin:50% 0;transform:scaleX(.92)">15</div>
<div class="t" style="left:6px;top:369.5px;width:18px;text-align:center;font-size:10px;color:#333;transform-origin:50% 0;transform:scaleX(.92)">16</div>
<div class="t" style="left:6px;top:384.0px;width:18px;text-align:center;font-size:10px;color:#333;transform-origin:50% 0;transform:scaleX(.92)">17</div>
<div class="t" style="left:6px;top:398.5px;width:18px;text-align:center;font-size:10px;color:#333;transform-origin:50% 0;transform:scaleX(.92)">18</div>
<div class="t" style="left:6px;top:413.0px;width:18px;text-align:center;font-size:10px;color:#333;transform-origin:50% 0;transform:scaleX(.92)">19</div>
<div class="a" style="left:70.400px;top:163.300px;width:47px;height:1.600px;background:#217346"></div>
<div class="a" style="left:22.800px;top:222.600px;width:1.600px;height:14.500px;background:#217346"></div>
<div class="t" style="left:80px;top:181.5px;width:37px;text-align:right;font-size:9.600px;color:#222">1000</div>
<div class="t" style="left:80px;top:196.0px;width:37px;text-align:right;font-size:9.600px;color:#222">2000</div>
<div class="t" style="left:80px;top:210.5px;width:37px;text-align:right;font-size:9.600px;color:#222">3000</div>
<div class="t" style="left:80px;top:225.0px;width:37px;text-align:right;font-size:9.600px;color:#222">4000</div>
<div class="a" style="left:69.900px;top:221.600px;width:47.800px;height:16px;border:1.600px solid #217346"></div>
<div class="a" style="left:745.500px;top:150px;width:15.400px;height:272px;background:#e6e6e6"></div>
<div class="box" style="left:748px;top:152px;width:10.500px;height:10.500px;border-color:#c6c6c6"></div>
<div class="a" style="left:750.500px;top:155.300px;border:2.800px solid transparent;border-bottom:3.200px solid #666;border-top:0"></div>
<div class="box" style="left:748.300px;top:175.500px;width:9.800px;height:210.500px;border-color:#c6c6c6"></div>
<div class="box" style="left:748px;top:412.500px;width:10.500px;height:10px;border-color:#c6c6c6"></div>
<div class="a" style="left:750.500px;top:416px;border:2.800px solid transparent;border-top:3.200px solid #666;border-bottom:0"></div>

<div id="sbar" class="a"></div>
<div id="status" class="a"></div>
<div class="a" style="left:6px;top:421.500px;width:739.500px;height:1px;background:#bdbdbd"></div>
<div class="a" style="left:25.500px;top:429.500px;border:2.400px solid transparent;border-right:3px solid #c0c0c0;border-left:0"></div>
<div class="a" style="left:46.500px;top:429.500px;border:2.400px solid transparent;border-left:3px solid #c0c0c0;border-right:0"></div>
<div class="a" style="left:78.500px;top:422px;width:40px;height:18.500px;background:#fff;border-bottom:2px solid #217346"></div>
<div class="t" style="transform:scaleX(0.844);left:87.800px;top:426.200px;font-size:10.300px;font-weight:bold;color:#217346">Sheet1</div>
<div class="a" style="left:459px;top:428px;width:1px;height:1px;background:#999;box-shadow:0 3px 0 #999,0 6px 0 #999"></div>
<div class="box" style="left:471.500px;top:427px;width:10.500px;height:11px;border-color:#c6c6c6"></div>
<div class="a" style="left:474.300px;top:429.700px;border:2.800px solid transparent;border-right:3.200px solid #666;border-left:0"></div>
<div class="box" style="left:482px;top:427px;width:235px;height:11px;border-color:#c6c6c6"></div>
<div class="box" style="left:734.500px;top:427px;width:10.500px;height:11px;border-color:#c6c6c6"></div>
<div class="a" style="left:738.600px;top:429.700px;border:2.800px solid transparent;border-left:3.200px solid #666;border-right:0"></div>
<div class="a" style="left:6px;top:441.500px;width:754.900px;height:1px;background:#e0e0e0"></div>
<div class="t" style="transform:scaleX(0.865);left:11px;top:445px;font-size:8.800px">Ready</div>
<div class="a" style="left:540.500px;top:443px;width:27px;height:15.200px;background:#c6c6c6"></div>
<svg class="a" style="left:548.500px;top:445.500px" width="11" height="10" viewBox="0 0 11 10"><path d="M.5 .5h9.500v8.500h-9.500zM.5 3.300h9.500M.5 6.200h9.500M3.700 .5v8.500M6.800 .5v8.500" fill="none" stroke="#737373" stroke-width=".85"/></svg>
<svg class="a" style="left:576.500px;top:445.500px" width="11" height="10" viewBox="0 0 11 10"><rect x=".5" y=".5" width="9.500" height="8.500" fill="none" stroke="#737373" stroke-width=".85"/><rect x="2.800" y="2.500" width="5" height="4.800" fill="none" stroke="#737373" stroke-width=".85"/><path d="M4.200 4.200h2.200M4.200 5.700h2.200" stroke="#666" stroke-width=".6"/></svg>
<svg class="a" style="left:603.500px;top:445.500px" width="11" height="10" viewBox="0 0 11 10"><path d="M.5 .5h9.500v8.500h-9.500zM3.800 .5v5h3.200v-5" fill="none" stroke="#737373" stroke-width=".85"/></svg>
<div class="a" style="left:627.500px;top:449.800px;width:3.600px;height:1.700px;background:#555"></div>
<div class="a" style="left:634px;top:450.200px;width:72px;height:1px;background:#aaa"></div>
<div class="a" style="left:668.700px;top:446.300px;width:3px;height:8.400px;background:#555"></div>
<div class="a" style="left:710px;top:450px;width:5px;height:1.300px;background:#555"></div>
<div class="a" style="left:711.900px;top:448.100px;width:1.300px;height:5px;background:#555"></div>
<div class="t" style="transform:scaleX(0.867);left:727px;top:445px;font-size:8.800px">100%</div>

<div class="a" style="left:114.500px;top:148px;width:190px;height:40.500px;background:#fff;border:1px solid #c8c8c8;box-shadow:0 1px 3px rgba(0,0,0,.18)"></div>
<div class="box" style="left:117.500px;top:151.500px;width:46px;height:17px"></div>
<div class="t" style="transform:scaleX(0.948);left:119.700px;top:153.300px">Calibri</div>
<div class="dd" style="left:155.800px;top:158.500px"></div>
<div class="box" style="left:163px;top:151.500px;width:34px;height:17px"></div>
<div class="t" style="transform:scaleX(0.792);left:166.400px;top:153.300px">11</div>
<div class="dd" style="left:189px;top:158.500px"></div>
<div class="t" style="left:201.800px;top:154px;font-size:11px;color:#555">A</div>
<div class="a" style="left:208px;top:154.500px;border:2.200px solid transparent;border-bottom:2.600px solid #2e75b6;border-top:0"></div>
<div class="t" style="left:218px;top:155px;font-size:9.500px;color:#555">A</div>
<div class="a" style="left:224px;top:154.500px;border:2.200px solid transparent;border-top:2.600px solid #2e75b6;border-bottom:0"></div>
<div class="t" style="transform:scaleX(0.834);left:234.600px;top:153.800px;font-size:12.500px;color:#555">$</div>
<div class="dd" style="left:247px;top:158.500px"></div>
<div class="t" style="left:257.500px;top:154px;font-size:10.500px;color:#555">%</div>
<div class="t" style="left:275px;top:148.100px;font-size:18px;font-weight:bold;color:#555">,</div>
<svg class="a" style="left:288px;top:154px" width="12" height="12" viewBox="0 0 12 12"><rect x=".6" y=".6" width="10.600" height="10.200" fill="#fff" stroke="#777" stroke-width=".8"/><path d="M.6 3.200h10.600M.6 8.200h10.600M4.200 .6v2.600M7.600 .6v2.600M4.200 8.200v2.600M7.600 8.200v2.600" stroke="#888" stroke-width=".7"/><path d="M2.300 5.700h7.200M3.600 4.500l-1.300 1.200l1.300 1.200M8.200 4.500l1.300 1.200l-1.300 1.200" fill="none" stroke="#3b82c8" stroke-width=".9"/></svg>
<div class="t" style="transform:scaleX(0.843);left:121.900px;top:171.300px;font-weight:bold;font-size:9.200px;color:#555">B</div>
<div class="t" style="left:138.500px;top:171.500px;font-style:italic;font-family:'Liberation Serif',serif;font-size:10.500px;color:#555">I</div>
<svg class="a" style="left:151px;top:171px" width="12" height="12" viewBox="0 0 12 12"><path d="M1 2.500h10M2.800 5h6.400M1 7.500h10M2.800 10h6.400" stroke="#777" stroke-width="1"/></svg>
<svg class="a" style="left:167.500px;top:170px" width="13" height="10" viewBox="0 0 13 10"><path d="M5.800 2.400l4 3.600l-3.600 3.800l-4.200-3.800z" fill="#fff" stroke="#666" stroke-width=".9" stroke-linejoin="round"/><path d="M4.700 4.600v-2.600a1.300 1.300 0 0 1 2.600 0v1.200" fill="none" stroke="#666" stroke-width=".8"/><path d="M10.300 4.800c1.800 1.600 2.300 3.300 1.400 4.300c-1 .8-2.200.2-1.800-1.300z" fill="#3b82c8"/></svg>
<div class="a" style="left:167.200px;top:180px;width:11.800px;height:2.800px;background:#ffff00"></div>
<div class="dd" style="left:182.800px;top:176px"></div>
<div class="t" style="left:195px;top:169.800px;font-size:10.200px;color:#444">A</div>
<div class="a" style="left:192px;top:180px;width:11.800px;height:2.800px;background:#ff0000"></div>
<div class="dd" style="left:207.600px;top:176px"></div>
<svg class="a" style="left:217px;top:172px" width="11" height="11" viewBox="0 0 11 11"><path d="M.5 .5h9.500v9.500h-9.500zM5.200 .5v9.500M.5 5.200h9.500" fill="none" stroke="#b0b0b0" stroke-width=".9" stroke-dasharray="1 .6"/></svg>
<div class="dd" style="left:232.200px;top:176px"></div>
<svg class="a" style="left:241px;top:171.500px" width="28" height="12" viewBox="0 0 28 12"><g font-family="Liberation Sans" font-size="6.400" fill="#555"><text x="5.500" y="5">.0</text><text x="2.500" y="11">.00</text><text x="18.500" y="5">.00</text><text x="21.800" y="11">.0</text></g><path d="M.8 3h4M2.400 1.400l-1.600 1.600l1.600 1.600" fill="none" stroke="#2e75b6" stroke-width=".9"/><path d="M16.500 9h4M18.900 7.400l1.600 1.600l-1.600 1.600" fill="none" stroke="#2e75b6" stroke-width=".9"/></svg>
<svg class="a" style="left:273.500px;top:171px" width="13" height="13" viewBox="0 0 13 13"><path d="M1 7.500l4-3l3.500 4.500l-4.500 3.500z" fill="#edc87e"/><path d="M5.800 4l2-1.600l3 3.800l-2 1.600z" fill="#666"/><path d="M9 2.500l2-1.700l1.300 1.600l-2 1.700z" fill="#555"/></svg>

<div class="a" style="left:114.500px;top:200px;width:148.500px;height:308.700px;background:#fff;border:1px solid #c8c8c8;box-shadow:0 1px 3px rgba(0,0,0,.18)"></div>
<svg class="a" style="left:119px;top:204px" width="12" height="12" viewBox="0 0 12 12"><path d="M3 .6l4.600 7.200M9 .6l-4.600 7.200" stroke="#555" stroke-width="1.100" fill="none"/><circle cx="2.800" cy="9.300" r="1.800" fill="none" stroke="#2e75b6" stroke-width="1"/><circle cx="9.200" cy="9.300" r="1.800" fill="none" stroke="#2e75b6" stroke-width="1"/></svg>
<div class="t" style="transform:scaleX(0.927);left:138.800px;top:204px">Cu<u>t</u></div>
<svg class="a" style="left:119px;top:221.500px" width="13" height="12" viewBox="0 0 13 12"><path d="M.6 .6h4l1.600 1.600v4.800h-5.600z" fill="#fff" stroke="#777" stroke-width=".9"/><path d="M4.800 3.400h4l1.600 1.600v5.600h-5.600z" fill="#fff" stroke="#777" stroke-width=".9"/><path d="M2 3h2M2 4.600h1.600" stroke="#2e75b6" stroke-width=".8"/><path d="M6.200 6.300h2.800M6.200 8h2.800" stroke="#2e75b6" stroke-width=".9"/></svg>
<div class="t" style="transform:scaleX(0.933);left:138.800px;top:221.700px"><u>C</u>opy</div>
<div class="a" style="left:133px;top:236.400px;width:129px;height:15.400px;background:#e6e6e6"></div>
<svg class="a" style="left:118.500px;top:238.500px" width="13" height="13" viewBox="0 0 13 13"><rect x=".8" y="1.500" width="8.500" height="9.500" fill="#edc87e"/><rect x="3" y=".4" width="4.200" height="2.200" fill="#777"/><path d="M6.300 5.500h3.700l1.800 1.800v4.900h-5.500z" fill="#fff" stroke="#666" stroke-width=".9"/></svg>
<div class="t" style="transform:scaleX(0.905);left:139.700px;top:238.300px;font-weight:bold">Paste Options:</div>
<svg class="a" style="left:137px;top:254.500px" width="17" height="18" viewBox="0 0 17 18"><rect x="1" y="2.700" width="11.800" height="13" rx=".8" fill="#fff" stroke="#e8c07a" stroke-width="1.700"/><path d="M2.600 4.600v-1.900h2.300c0-2.900 4-2.900 4 0h2.300v1.900z" fill="#666"/><circle cx="6.900" cy="2" r=".7" fill="#fff"/><path d="M3.600 6h6.400M3.600 10.500h5M3.600 12.200h3" stroke="#5b93cf" stroke-width=".8"/><path d="M3.600 8.200h6.200" stroke="#e05a44" stroke-width="1.300" stroke-dasharray="1.200 .4"/><path d="M16.300 4.600l.5 1.500l-4.800 6.200l-2-1.600l5-5.600z" fill="#666"/><path d="M9.700 11l2.200 1.800c-.8 2.600-4 4.500-8.400 4.100c2.800-1.300 4.600-3.700 6.200-5.900z" fill="#2f6fb5"/></svg>
<svg class="a" style="left:159px;top:254.500px" width="15" height="18" viewBox="0 0 15 18"><rect x="1.200" y="2.700" width="11.200" height="13" rx=".8" fill="#fff" stroke="#e8c07a" stroke-width="1.700"/><path d="M2.600 4.600v-1.900h2.300c0-2.900 4-2.900 4 0h2.300v1.900z" fill="#666"/><circle cx="6.900" cy="2" r=".7" fill="#fff"/><path d="M3.600 6h6.400M3.600 8.200h6.400M3.600 12.600h6.400" stroke="#5b93cf" stroke-width=".9"/><path d="M3.600 10.400h6.400" stroke="#a9c4e2" stroke-width="1.400"/></svg>
<div class="t" style="transform:scaleX(0.882);left:138.800px;top:276.500px">Paste <u>S</u>pecial...</div>
<div class="a" style="left:138.500px;top:291.200px;width:123.500px;height:1px;background:#e1e1e1"></div>
<svg class="a" style="left:118.500px;top:295.500px" width="13" height="13" viewBox="0 0 13 13"><circle cx="7.500" cy="5" r="4.200" fill="#fff" stroke="#2e75b6" stroke-width="1.200"/><path d="M4.500 8l-3.600 3.600" stroke="#2e75b6" stroke-width="1.700" stroke-linecap="round"/><path d="M7.500 4.300v3" stroke="#444" stroke-width="1.200"/><circle cx="7.500" cy="2.800" r=".75" fill="#444"/></svg>
<div class="t" style="transform:scaleX(0.956);left:138.800px;top:295.500px">Smart <u>L</u>ookup</div>
<div class="a" style="left:138.500px;top:310px;width:123.500px;height:1px;background:#e1e1e1"></div>
<div class="t" style="transform:scaleX(0.899);left:138.800px;top:314.300px"><u>I</u>nsert...</div>
<div class="t" style="transform:scaleX(0.895);left:138.800px;top:332px"><u>D</u>elete...</div>
<div class="t" style="transform:scaleX(0.939);left:138.800px;top:349.600px">Clear Co<u>n</u>tents</div>
<div class="a" style="left:138.500px;top:364.200px;width:123.500px;height:1px;background:#e1e1e1"></div>
<svg class="a" style="left:118.500px;top:367.500px" width="13" height="13" viewBox="0 0 13 13"><rect x="3.200" y="2.800" width="7.800" height="8.800" fill="#fff" stroke="#555" stroke-width=".9"/><path d="M5 5h3.500" stroke="#e05a33" stroke-width="1.200"/><path d="M5 7.200h4.800" stroke="#3b82c8" stroke-width="1.200"/><path d="M5 9.400h4" stroke="#4a9c5d" stroke-width="1.200"/><path d="M3.200 .3l-2.700 4.200h2l-1.600 4l4-5.200h-2.100l1.800-3z" fill="#eda23a"/></svg>
<div class="t" style="transform:scaleX(0.953);left:138.800px;top:368.100px"><u>Q</u>uick Analysis</div>
<div class="t" style="transform:scaleX(0.919);left:138.800px;top:385.800px">Filt<u>e</u>r</div>
<div class="a" style="left:252.200px;top:388.500px;border:2.900px solid transparent;border-left:3.700px solid #666;border-right:0"></div>
<div class="t" style="transform:scaleX(0.883);left:138.800px;top:403.400px">S<u>o</u>rt</div>
<div class="a" style="left:252.200px;top:406px;border:2.900px solid transparent;border-left:3.700px solid #666;border-right:0"></div>
<div class="a" style="left:138.500px;top:418px;width:123.500px;height:1px;background:#e1e1e1"></div>
<svg class="a" style="left:118px;top:421.500px" width="13" height="12" viewBox="0 0 13 12"><path d="M4 2.300h7.600v6h-5.200l-2.200 2.400v-2.400h-1.400v-3" fill="#fff" stroke="#666" stroke-width=".9"/><path d="M2.100 .3v4M.1 2.300h4" stroke="#3a9c5a" stroke-width="1.100"/></svg>
<div class="t" style="transform:scaleX(0.968);left:138.800px;top:421.500px">Insert Co<u>m</u>ment</div>
<div class="a" style="left:138.500px;top:436.800px;width:123.500px;height:1px;background:#e1e1e1"></div>
<svg class="a" style="left:118.700px;top:440.700px" width="12" height="13" viewBox="0 0 12 13"><rect x=".8" y=".8" width="10" height="11" fill="#fff" stroke="#666" stroke-width=".8"/><rect x=".8" y=".8" width="10" height="1.900" fill="#3b82c8"/><path d="M5.200 5.800h3.800M5.200 8.800h3.800" stroke="#777" stroke-width=".8"/><circle cx="3.300" cy="5.800" r=".9" fill="none" stroke="#666" stroke-width=".6"/><circle cx="3.300" cy="8.800" r=".9" fill="none" stroke="#666" stroke-width=".6"/></svg>
<div class="a" style="left:133.500px;top:438.800px;width:62.500px;height:16.200px;border:1.400px solid #f01420;border-radius:1.500px"></div>
<div class="t" style="transform:scaleX(0.918);left:138.800px;top:440.700px"><u>F</u>ormat Cells...</div>
<div class="t" style="transform:scaleX(0.961);left:138.800px;top:458.500px">Pic<u>k</u> From Drop-down List...</div>
<div class="t" style="transform:scaleX(0.936);left:138.800px;top:475.700px">Define N<u>a</u>me...</div>
<svg class="a" style="left:117.300px;top:493px" width="14" height="13" viewBox="0 0 14 13"><circle cx="5.500" cy="4.800" r="4.200" fill="#fff" stroke="#777" stroke-width=".8"/><path d="M1.300 4.800h8.400M5.500 .6v8.400M3 1.800c1.500 2 1.500 4 0 6M8 1.800c-1.500 2-1.500 4 0 6" fill="none" stroke="#777" stroke-width=".6"/><rect x="3.600" y="8.200" width="5" height="3.600" rx="1.800" fill="#fff" stroke="#2e75b6" stroke-width="1.100"/><rect x="7.600" y="8.200" width="5" height="3.600" rx="1.800" fill="none" stroke="#2e75b6" stroke-width="1.100"/></svg>
<div class="t" style="transform:scaleX(0.959);left:138.800px;top:493.200px">Hyperl<u>i</u>nk...</div>

</body></html>
